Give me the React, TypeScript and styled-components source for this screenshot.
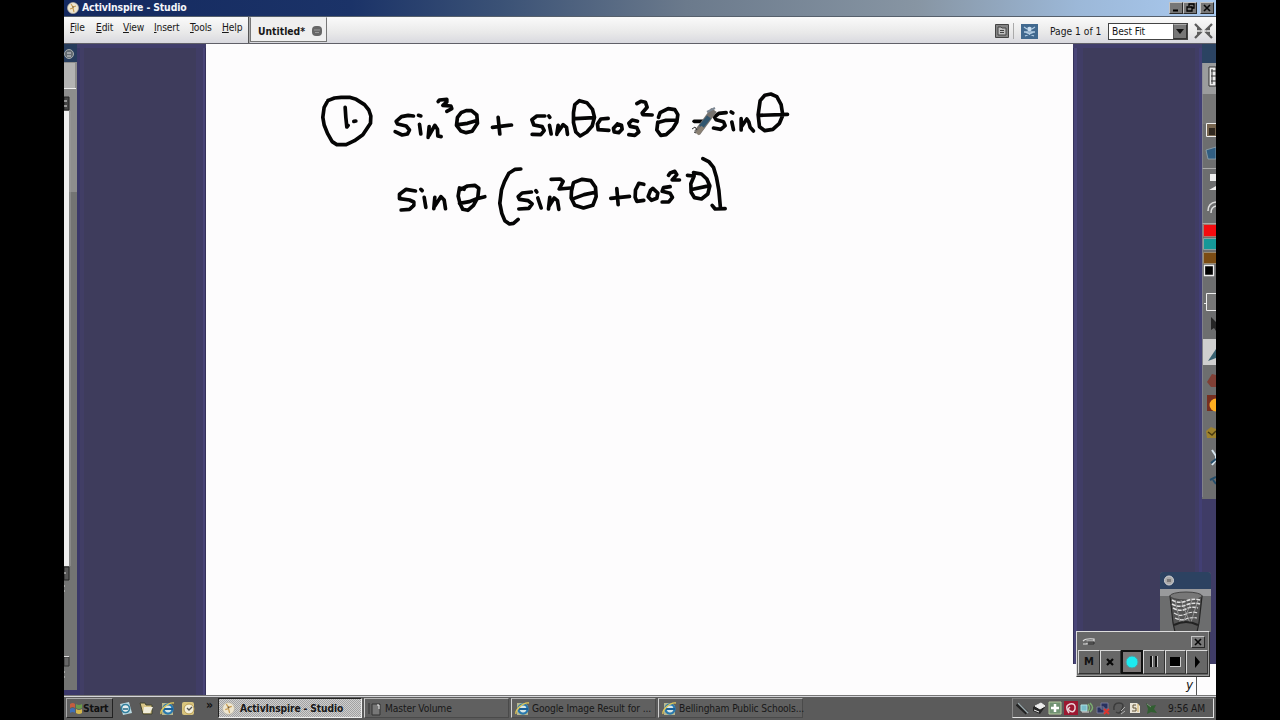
import React from "react";
import styled, {createGlobalStyle, css} from "styled-components";

const GlobalStyle = createGlobalStyle`
  * {
    box-sizing: border-box;
  }

  body {
    margin: 0;
    background: #000;
    overflow: hidden;
    font-family: "DejaVu Sans Condensed", "DejaVu Sans", sans-serif;
    font-stretch: condensed;
    font-size: 10.5px;
    color: #181818;
  }

  svg {
    display: block;
    flex: none;
  }
`

const Desktop = styled.div`
  width: 1152px;
  height: 720px;
  margin-left: 64px;
  display: flex;
  flex-direction: column;
  overflow: hidden;
  position: relative;
`

const TitleBar = styled.header`
  height: 17px;
  flex: none;
  display: flex;
  align-items: center;
  gap: 3px;
  padding: 0 2px 1px 3px;
  background: linear-gradient(90deg, #14295f 0%, #1b3368 25%, #3b5276 38%, #6b7a8c 54%, #8795a3 74%, #9cb8d8 88%, #a9c9ef 100%);
  border-bottom: 1px solid #56606c;
`

const Title = styled.h1`
  flex: 1;
  margin: 0;
  font-size: 10.4px;
  font-weight: bold;
  line-height: 15px;
  letter-spacing: -0.15px;
  color: #f4f6fa;
`

const WindowButtons = styled.div`
  display: flex;
`

const WindowButton = styled.button<{ $apart?: boolean }>`
  width: 14px;
  height: 12px;
  padding: 0;
  margin-left: ${p => p.$apart ? 3 : 0}px;
  display: grid;
  place-items: center;
  background: #777;
  border: 1px solid;
  border-color: #c4c4c4 #292929 #292929 #c4c4c4;
`

const MenuBar = styled.nav`
  height: 27px;
  flex: none;
  display: flex;
  background: linear-gradient(#fafafa, #e9e9e9 60%, #d9d9df);
  border-bottom: 1px solid #606068;
`

const Menus = styled.div`
  width: 185px;
  padding: 4px 0 0 6px;
  display: flex;
  border-right: 1px solid #555;
  box-shadow: 1px 0 #aaa;
`

const MenuItem = styled.span<{ $width: number }>`
  width: ${p => p.$width}px;
  font-size: 10.2px;
  line-height: 14px;
  letter-spacing: -0.15px;
`

const DocTab = styled.div`
  width: 77px;
  height: 25px;
  margin-left: 1px;
  padding: 2px 4px 0 7px;
  display: flex;
  align-items: center;
  justify-content: space-between;
  font-size: 10.3px;
  font-weight: bold;
  background: #efefef;
  border: 1px solid #777;
  border-top-color: #eee;
`

const PageTools = styled.div`
  margin-left: auto;
  padding: 2px 3px 0 0;
  display: flex;
  align-items: center;
`

const PageIcons = styled.div`
  display: flex;
  align-items: center;
  gap: 7px;
`

const PageCount = styled.span`
  width: 58px;
  margin-left: 12px;
  font-size: 10.2px;
  white-space: nowrap;
`

const ZoomSelect = styled.div`
  width: 80px;
  height: 17px;
  padding-left: 3px;
  display: flex;
  align-items: center;
  justify-content: space-between;
  font-size: 10.2px;
  letter-spacing: -0.1px;
  background: #fff;
  border: 1px solid #444;
  margin-right: 6px;
`

const ZoomArrow = styled.span`
  width: 14px;
  height: 15px;
  display: grid;
  place-items: center;
  background: #777;
  border: 1px solid;
  border-color: #aaa #333 #333 #555;
`

const Workspace = styled.main`
  height: 651px;
  flex: none;
  display: flex;
`

const Gutter = styled.div<{ $side: "left" | "right" }>`
  flex: 1;
  background: #3e3c5c;
  border-top: 4px solid #413e6c;
  box-shadow: ${p => p.$side === "left"
    ? "inset 3px 0 #3a3868, inset 7px 0 #413e65, inset -1px 0 #34315a, inset -3px 0 #494578, inset -10px 0 #403d66"
    : "inset 1px 0 #34315a, inset 4px 0 #494578, inset 10px 0 #403d66, inset -3px 0 #423f74, inset -7px 0 #403d65"};
`

const PageSheet = styled.section`
  width: 867px;
  background: #fdfcfd;
`

const RightSide = styled.aside`
  width: 143px;
  display: flex;
  flex-direction: column;
`

const RightTop = styled.div`
  height: 620px;
  display: flex;
`

const RightFoot = styled.footer`
  flex: 1;
  background: #fdfcfd;
  display: flex;
  align-items: flex-end;
  justify-content: flex-end;
`

const TypedLetter = styled.span`
  width: 14px;
  height: 18px;
  margin-right: 19px;
  padding-left: 3px;
  border-right: 1px solid #555;
  font: italic 12px/16px "DejaVu Sans", sans-serif;
`

const Dock = styled.div<{ $width: number, $height: number }>`
  width: ${p => p.$width}px;
  height: ${p => p.$height}px;
  flex: none;
  overflow: hidden;
  background: #6b6c6d;
`

const LeftColumn = styled.div`
  width: 142px;
  display: flex;
  background: #3b386a;
`

const RightDockColumn = styled.div`
  width: 14px;
  background: #3f3c66;
`

const TrashWindow = styled.div`
  position: absolute;
  left: 1096px;
  top: 572px;
  width: 51px;
  height: 60px;
  border-radius: 3px 3px 0 0;
  overflow: hidden;
`

const Recorder = styled.div`
  position: absolute;
  left: 1012px;
  top: 631px;
  width: 134px;
  height: 46px;
  padding: 1px;
  background: #686868;
  border: 1px solid;
  border-color: #ddd #333 #333 #ddd;
  box-shadow: inset -1px -1px #999;
`

const RecorderHead = styled.div`
  height: 17px;
  padding: 0 3px 0 4px;
  display: flex;
  align-items: center;
  justify-content: space-between;
`

const RecorderButtons = styled.div`
  display: grid;
  grid-template-columns: repeat(6, 1fr);
  height: 24px;
`

const RecorderButton = styled.button<{ $on?: boolean }>`
  padding: 0 0 1px;
  display: grid;
  place-items: center;
  background: #676767;
  border: 1px solid;
  border-color: #d8d8d8 #333 #333 #d8d8d8;
  font: bold 11px "DejaVu Sans Condensed", "DejaVu Sans", sans-serif;
  color: #111;
  ${p => p.$on && css`
    background: #7c7777;
    border: 2px solid #111;
  `}
`

const TaskBar = styled.footer`
  flex: 1;
  padding: 2px;
  display: flex;
  align-items: center;
  background: #5b5b5b;
  border-top: 1px solid #777;
  box-shadow: inset 0 1px #d6d6da;
`

const StartButton = styled.button`
  width: 47px;
  height: 20px;
  padding: 0 0 0 2px;
  display: flex;
  align-items: center;
  font: bold 10.3px "DejaVu Sans Condensed", "DejaVu Sans", sans-serif;
  letter-spacing: -0.2px;
  color: #111;
  background: #5e5e5e;
  border: 1px solid;
  border-color: #aaa #222 #222 #aaa;
`

const QuickLaunch = styled.div`
  width: 105px;
  height: 20px;
  padding-left: 5px;
  display: flex;
  align-items: center;
  gap: 6px;
`

const More = styled.span`
  margin: -6px 0 0 4px;
  font-size: 12px;
  font-weight: bold;
  color: #111;
`

const Task = styled.div<{ $width: number, $active?: boolean }>`
  width: ${p => p.$width}px;
  height: 20px;
  margin-right: 2px;
  padding: 1px 3px 0;
  display: flex;
  align-items: center;
  gap: 2px;
  white-space: nowrap;
  font-size: 10.2px;
  letter-spacing: -0.12px;
  background: #606060;
  border: 1px solid;
  border-color: #b4b4b4 #4a4a4a #4a4a4a #d0d0d0;
  ${p => p.$active && css`
    font-weight: bold;
    background: repeating-conic-gradient(#cfcfcf 0 25%, #a2a2a2 0 50%) 0 0 / 2px 2px;
    border-color: #222 #eee #eee #222;
  `}
`

const Tray = styled.div`
  width: 202px;
  height: 20px;
  margin-left: auto;
  padding: 0 8px 0 3px;
  display: flex;
  align-items: center;
  justify-content: space-between;
  border: 1px solid;
  border-color: #777 #e4e4e4 #e4e4e4 #888;
`

const TrayIcons = styled.div`
  display: flex;
  gap: 2px;
`

const Clock = styled.time`
  font-size: 10.2px;
  letter-spacing: -0.1px;
`

const menus = [
  {name: "File", width: 26},
  {name: "Edit", width: 27},
  {name: "View", width: 31},
  {name: "Insert", width: 36},
  {name: "Tools", width: 32},
  {name: "Help", width: 24},
]

// pen strokes, drawn at three times the size of the page
const firstStrokes = [
  "M55 62L75 54L95 52L120 52L140 58L165 74L178 90L184 108L183 130L160 164L135 182L110 194L82 194L68 185L54 160L44 135L40 112L44 82L55 62",
  "M107 82L109 112L112 141L116 136", "M133 124L139 123",
  "M312 108L296 106L276 110L260 124L264 132L290 138L300 150L294 162L278 165L257 155",
  "M330 133L334 162", "M327 106L334 108",
  "M356 172L359 140M359 166L376 136L384 148L385 168L395 170",
  "M386 65L390 60L412 58L412 66L400 76L424 78L427 86L412 94",
  "M455 98L470 92L486 92L502 105L504 130L488 154L470 158L454 153L441 136L444 112L455 98M446 134L474 130L500 122",
  "M549 142L606 135M566 112L571 162",
  "M318 333L290 328L270 343L270 356L300 360L313 366L313 376L300 388L275 390",
  "M344 352L349 382", "M334 328L338 332",
  "M373 386L376 352M376 378L394 350L404 360L408 386",
  "M464 328L450 324L446 348L452 372L460 388L475 391L492 376L505 352L508 325L496 316L474 318L454 328M450 370L480 365L502 356L526 350",
  "M634 267L617 268L598 280L585 305L576 330L571 370L577 400L586 422L600 432L612 430L626 418",
]

const secondStrokes = [
  "M136 108L112 108L97 119L103 135L128 140L134 152L124 164L98 163",
  "M150 136L155 162", "M148 108L151 112",
  "M172 163L176 136M174 158L191 134L201 142L204 163",
  "M222 98L226 74L240 62L262 68L279 88L285 112L278 138L262 156L242 168L229 156L222 128L222 98M228 116L284 113",
  "M326 115L304 117L294 132L296 149L328 151",
  "M354 132L342 145L344 156L358 158L368 148L366 136L354 132",
  "M414 124L398 120L388 130L392 139L412 143L418 156L406 166L388 164",
  "M412 71L424 64L438 67L443 82L428 99L430 104L458 105",
  "M477 112L482 98L506 86L526 89L535 104L532 126L520 146L500 164L484 166L472 150L475 126M478 127L500 121L530 120",
  "M584 124L614 124",
  "M680 98L658 100L645 111L650 119L672 125L677 137L664 148L642 144",
  "M697 126L702 149", "M695 96L700 99",
  "M725 150L725 116M726 140L742 117L748 126L752 142L762 153",
  "M776 104L782 62L796 46L814 42L832 50L845 74L850 106L840 130L820 148L796 152L780 140L776 104M780 106L864 103",
  "M96 336L68 339L56 350L60 358L86 362L98 372L88 385L58 387",
  "M115 354L125 384", "M109 332L112 336",
  "M147 387L151 352M149 378L164 354L174 362L178 388",
  "M155 298L182 297L191 304L179 327L213 324",
  "M216 333L222 308L248 298L274 302L288 322L290 350L280 376L252 384L226 376L215 354L216 333M222 356L254 344L288 337",
  "M334 355L390 349M352 326L356 374",
  "M433 313L418 310L408 330L407 352L412 364L433 361",
  "M453 331L446 350L456 361L472 355L475 339L460 325L453 331",
  "M512 320L492 323L488 334L512 340L519 352L508 366L488 366",
  "M507 286L512 279L526 274L532 284L518 300L540 300",
  "M564 286L582 288M582 278L606 282L622 297L631 318L625 342L606 357L585 353L575 337L574 311L584 288M580 328L631 317",
  "M610 236L629 246L642 262L651 292L658 330L663 385M638 376L647 387L677 386",
]

const Ink = () => (
  <svg width="867" height="651" viewBox="206 44 867 651" fill="none" stroke="#050505" strokeWidth="11"
       strokeLinecap="round" strokeLinejoin="round">
    <g transform="translate(309.500 80) scale(.3333)">
      {firstStrokes.map(d => <path key={d} d={d}/>)}
    </g>
    <g transform="translate(499.500 80) scale(.3333)">
      {secondStrokes.map(d => <path key={d} d={d}/>)}
    </g>
    {/* pen cursor */}
    <g strokeLinecap="butt">
      <path d="M697 133L714 110" stroke="#77736f" strokeWidth="7"/>
      <path d="M701 127L709 117" stroke="#31566f" strokeWidth="5"/>
      <path d="M697 134L703 127" stroke="#8b8174" strokeWidth="4"/>
      <path d="M707 112L715 108" stroke="#7c8793" strokeWidth="2"/>
      <path d="M692 129l3-2 2 3M694 132l2 1" stroke="#333" strokeWidth="1"/>
    </g>
  </svg>
)

const InspireIcon = ({size = 12}: { size?: number }) => (
  <svg width={size} height={size} viewBox="0 0 12 12">
    <circle cx="6" cy="6" r="5.5" fill="#eee6d0" stroke="#b7b2a4" strokeWidth=".7"/>
    <path d="M4 2l2 3 3-1M3 7l3-1 1 4" fill="none" stroke="#c99c50" strokeWidth="1.1"/>
    <circle cx="6" cy="5" r=".8" fill="#6c5b45"/>
  </svg>
)

const ExplorerIcon = ({size = 15}: { size?: number }) => (
  <svg width={size} height={size} viewBox="0 0 15 15">
    <path d="M2 2h8l3 3v9H2z" fill="#b7b78f"/>
    <circle cx="8" cy="8" r="4.600" fill="#d7e8e8" stroke="#2a79ae" strokeWidth="2.400"/>
    <path d="M4 8h9" stroke="#1c6097" strokeWidth="2"/>
    <path d="M1 13C0 9 8 1 14 2" fill="none" stroke="#dfc65a" strokeWidth="1.400"/>
  </svg>
)

const LeftDockArt = () => (
  <svg width="13" height="646" viewBox="64 44 13 646">
    <path d="M64 44h13v646H64z" fill="#737473"/>
    <path d="M64 62h13v130H64z" fill="#8d8d8d"/>
    <path d="M64 44h13v18H64z" fill="#263c5d"/>
    <circle cx="69" cy="54" r="4.500" fill="#626b72" stroke="#a4aaad"/>
    <path d="M67 53h4M67 56h4" stroke="#ddd"/>
    <path d="M64 63h11v25H64z" fill="#b3b3b3"/>
    <path d="M64 88.500h12" stroke="#eee"/>
    <path d="M64 111h5v455h-5z" fill="#efefef"/>
    <path d="M70 111v455" stroke="#9b9b9b"/>
    <path d="M64 97h5v13h-5z" fill="#444" stroke="#222"/>
    <path d="M64 101h3M64 106h3" stroke="#eee"/>
    <path d="M64 567h5v13h-5z" fill="#555" stroke="#222"/>
    <path d="M64 573h2M64 586h1M64 591h1M64 672h1M64 677h1" stroke="#ddd"/>
    <path d="M64 657h5v9h-5z" fill="#666" stroke="#333"/>
    <path d="M64 656.500h5" stroke="#ddd"/>
  </svg>
)

const RightDockArt = () => (
  <svg width="14" height="455" viewBox="1202 44 14 455">
    <path d="M1202 44h14v455h-14z" fill="#6d6e6f"/>
    <path d="M1202 44h14v19h-14z" fill="#2b4362"/>
    <path d="M1202 63h14v34h-14z" fill="#9b9c9d"/>
    <path d="M1202 94h14v30h-14z" fill="#777"/>
    <path d="M1209 67h7v19h-7z" fill="#eee" stroke="#333"/>
    <path d="M1211 71h5M1211 76h5M1211 81h5M1212 69v15" stroke="#333"/>
    <path d="M1206.500 123.500h12v13h-12z" fill="#786650" stroke="#eee"/>
    <path d="M1209 128h6v7h-6z" fill="#302820"/>
    <path d="M1206 150l10-3v12h-8z" fill="#315e82" stroke="#9eafb8" strokeWidth=".7"/>
    <path d="M1202 168.500h14M1202 223.500h14" stroke="#aaa"/>
    <path d="M1210 174h6v7h-6zM1209 190l7-4v4z" fill="#eee"/>
    <path d="M1208 211q0-8 8-9M1211 213q0-6 5-7" fill="none" stroke="#ddd" strokeWidth="1.500"/>
    <path d="M1203.500 224.500h13v12h-13z" fill="#f40b10" stroke="#a6786f"/>
    <path d="M1203.500 238.500h13v11h-13z" fill="#159898" stroke="#8ba0a0"/>
    <path d="M1203.500 252.500h13v11h-13z" fill="#7b4c14" stroke="#9b8a70"/>
    <path d="M1204.500 265.500h9v10h-9z" fill="#000" stroke="#eee" strokeWidth="1.300"/>
    <path d="M1216 293.500h-9.500v17h9.500" fill="#777" stroke="#eee"/>
    <path d="M1204 303.500h2" stroke="#eee"/>
    <path d="M1211 317l5 5v9l-2-3-3 2z" fill="#252525"/>
    <path d="M1203 339h13v26h-13z" fill="#cfcfcf"/>
    <path d="M1208 361l8-12v9z" fill="#386171"/>
    <path d="M1207 382l5-8 4 1v12h-5z" fill="#803f35"/>
    <path d="M1207 395h9v16h-9z" fill="#762e20"/>
    <circle cx="1216" cy="405" r="6.500" fill="#ffae20"/>
    <path d="M1206 431l5-4 5 2v9h-9z" fill="#9e822e"/>
    <path d="M1208 432l4 3 4-4" fill="none" stroke="#463913" strokeWidth="1.500"/>
    <path d="M1212 450l4 6v4l-4 5" fill="none" stroke="#d5e4ee" strokeWidth="2"/>
    <path d="M1211 463l5-4M1210 480l6-3M1213 480l3 4" stroke="#244e6c" strokeWidth="2"/>
    <path d="M1202.500 63v434" stroke="#8a8a97" strokeWidth=".7"/>
  </svg>
)

const TrashArt = () => (
  <svg width="51" height="60" viewBox="0 0 51 60">
    <path d="M0 0h51v60H0z" fill="#6c6d6e"/>
    <path d="M0 0h51v17H0z" fill="#2c4261"/>
    <path d="M0 17h51v7H0z" fill="#999a9c"/>
    <circle cx="9" cy="8.500" r="4.500" fill="#aaa" stroke="#d2d5d6"/>
    <path d="M7 7h4v3H7z" fill="#777"/>
    <path d="M10 24l3 27 2 9h22l2-9 3-27z" fill="#555" stroke="#242424" strokeWidth="1.200"/>
    <ellipse cx="26" cy="24" rx="16" ry="4" fill="#777" stroke="#444"/>
    <g fill="none" stroke="#dedede" strokeWidth="1.600" strokeDasharray="4 1">
      <path d="M12 28q7 4 14 1t14-1M12 32q7 4 14 1t14-1M13 36q7 4 13 1t12-1"/>
      <path d="M14 41q6 4 12 1t12-1M15 46q6 3 11 1t11-1" strokeWidth="1.200"/>
    </g>
    <path d="M15 28l5 22M21 28l9 23M32 28l-9 23M38 28l-7 22" fill="none" stroke="#aaa" strokeWidth=".7"/>
    <path d="M14 53q12-6 24 0" fill="none" stroke="#222" strokeWidth="2"/>
  </svg>
)

const trayArt = [
  <><path d="M1 3l10 9" stroke="#222" strokeWidth="4"/><path d="M2 2l10 10" stroke="#98a5a9" strokeWidth="1.500"/></>,
  <><path d="M1 6l7-4 5 4-5 7-7-3z" fill="#262626"/><path d="M3 5l6-3 4 3-5 3zM2 9l5 2" fill="#eee" stroke="#eee"/></>,
  <><path d="M1 1h12v12H1z" fill="#719273" stroke="#b5c79d"/><path d="M7 3v8M3 7h8" stroke="#fff" strokeWidth="2.500"/></>,
  <><path d="M0 0h14v14H0z" fill="#9c1831"/><path d="M5 12q-5-7 1-9 6-1 5 5-1 4-5 2-3-2 0-4" fill="none" stroke="#ead4da" strokeWidth="1.500"/></>,
  <><path d="M1 4h6v6H1z" fill="#79bdca" stroke="#aee0e2"/><path d="M8 3q3 4 0 7M10 2q5 5 0 9" fill="none" stroke="#7cb071" strokeWidth="1.500"/><path d="M2 11h7" stroke="#ddd"/></>,
  <><path d="M5 2h7v6H5zM1 6h7v6H1z" fill="#28315f" stroke="#777896"/><path d="M8 8l5 5M13 8l-5 5" stroke="#dc3530" strokeWidth="2"/></>,
  <><path d="M2 9q-1-7 5-7t3 6q-2 6-6 3" fill="none" stroke="#3c3c3c" strokeWidth="1.500"/><path d="M9 10l4-4M9 13l4-3" stroke="#b0b0b0"/></>,
  <><path d="M2 2h7l3 3v7H2z" fill="#e9e3d7"/><path d="M8 4H5v3h3v3H4" fill="none" stroke="#635439"/><path d="M10 3v8" stroke="#dab563"/></>,
  <><path d="M2 2l4 3 6-1-2 4 3 4-6-1-4 2 1-5z" fill="#315e31"/><path d="M3 3l4 3" stroke="#799178"/></>,
]

const CloseMark = () => (
  <svg width="8" height="8" viewBox="0 0 8 8">
    <path d="M1 1l6 6M7 1L1 7" stroke="#080808" strokeWidth="1.600"/>
  </svg>
)

const App = () => {
  return (
    <>
      <GlobalStyle/>
      <Desktop>
        <TitleBar>
          <InspireIcon size={12}/>
          <Title>ActivInspire - Studio</Title>
          <WindowButtons>
            <WindowButton aria-label="Minimize">
              <svg width="8" height="8"><path d="M1 6.500h5" stroke="#000" strokeWidth="2"/></svg>
            </WindowButton>
            <WindowButton aria-label="Restore">
              <svg width="9" height="9"><path d="M3 3V1h5v4H6M1 4h5v4H1z" fill="none" stroke="#000" strokeWidth="1.300"/></svg>
            </WindowButton>
            <WindowButton $apart aria-label="Close"><CloseMark/></WindowButton>
          </WindowButtons>
        </TitleBar>

        <MenuBar>
          <Menus>
            {menus.map(m => <MenuItem key={m.name} $width={m.width}><u>{m.name[0]}</u>{m.name.slice(1)}</MenuItem>)}
          </Menus>
          <DocTab>
            Untitled*
            <svg width="10" height="10" viewBox="0 0 10 10">
              <rect width="10" height="10" rx="4" fill="#666"/>
              <path d="M2 4h6M3 6.500h4" stroke="#999"/>
            </svg>
          </DocTab>
          <PageTools>
            <PageIcons>
              <svg width="19" height="16" viewBox="0 0 19 16">
                <path d="M.5 1.500h13v13H.5z" fill="#858585" stroke="#444"/>
                <path d="M3 4h3l1 1h4v7H3zM5 7.500h4M5 9.500h4" fill="#c1c1c1" stroke="#444"/>
                <path d="M18.500 0v16" stroke="#aaa"/>
              </svg>
              <svg width="17" height="15" viewBox="0 0 17 15">
                <path d="M0 0h17v15H0z" fill="#41698f"/>
                <circle cx="8.500" cy="5" r="2.300" fill="#c9def0"/>
                <path d="M3 3l3 2M14 3l-3 2M3 8h11M4 12l9-4M13 12L4 8" stroke="#b3cce2" strokeWidth="1.300"/>
              </svg>
            </PageIcons>
            <PageCount>Page 1 of 1</PageCount>
            <ZoomSelect>
              Best Fit
              <ZoomArrow><svg width="8" height="5"><path d="M0 0h8L4 5z" fill="#111"/></svg></ZoomArrow>
            </ZoomSelect>
            <svg width="19" height="18" viewBox="0 0 19 18">
              <path d="M1 2l5 5H3M18 2l-5 5h3M1 16l5-5H3M18 16l-5-5h3M6 7l1 1M13 7l-1 1M6 11l1-1M13 11l-1-1" fill="none"
                    stroke="#5c5c5c" strokeWidth="2.300"/>
            </svg>
          </PageTools>
        </MenuBar>

        <Workspace>
          <LeftColumn>
            <Dock $width={13} $height={646}><LeftDockArt/></Dock>
            <Gutter $side="left"/>
          </LeftColumn>
          <PageSheet><Ink/></PageSheet>
          <RightSide>
            <RightTop>
              <Gutter $side="right"/>
              <RightDockColumn>
                <Dock $width={14} $height={455}><RightDockArt/></Dock>
              </RightDockColumn>
            </RightTop>
            <RightFoot><TypedLetter>y</TypedLetter></RightFoot>
          </RightSide>
        </Workspace>

        <TaskBar>
          <StartButton>
            <svg width="14" height="15" viewBox="0 0 14 15">
              <path d="M1 3q3-2 5 0v4Q4 5 1 7z" fill="#c45d3f"/>
              <path d="M7 3q3 2 6 0v4q-3 2-6 0z" fill="#6a9a4a"/>
              <path d="M1 8q3-2 5 0v4q-2-2-5 0z" fill="#3f6fb5"/>
              <path d="M7 8q3 2 6 0v4q-3 2-6 0z" fill="#d5b74b"/>
            </svg>
            Start
          </StartButton>
          <QuickLaunch>
            <svg width="15" height="15" viewBox="0 0 15 15">
              <path d="M2 3l9-2 3 11-9 2z" fill="#b9d7df"/>
              <circle cx="7.500" cy="7.500" r="4" fill="#e6eeee" stroke="#327f9d" strokeWidth="1.700"/>
              <path d="M5 8h5" stroke="#256883" strokeWidth="1.500"/>
            </svg>
            <svg width="15" height="15" viewBox="0 0 15 15">
              <path d="M1 2h5l1 2h6v9H4z" fill="#d9c688" stroke="#42442e"/>
              <path d="M5 6h9l-3 6H4z" fill="#f0edda"/>
            </svg>
            <ExplorerIcon/>
            <svg width="15" height="15" viewBox="0 0 15 15">
              <rect x="1" y="1" width="12" height="13" rx="2" fill="#d8c47d"/>
              <circle cx="8" cy="8" r="5" fill="#f3efd9" stroke="#b89b50"/>
              <path d="M6 7l2 2 3-3" fill="none" stroke="#555" strokeWidth="1.300"/>
            </svg>
            <More>»</More>
          </QuickLaunch>
          <Task $width={144} $active><InspireIcon size={13}/>&nbsp;ActivInspire - Studio</Task>
          <Task $width={145}>
            <svg width="15" height="14" viewBox="0 0 15 14">
              <path d="M1 1v11M4 2h8v11H4z" fill="#777" stroke="#333"/>
              <path d="M9 3h2v4" fill="none" stroke="#eee"/>
            </svg>
            Master Volume
          </Task>
          <Task $width={145}><ExplorerIcon/>Google Image Result for ...</Task>
          <Task $width={145}><ExplorerIcon/>Bellingham Public Schools...</Task>
          <Tray>
            <TrayIcons>
              {trayArt.map((art, i) => <svg key={i} width="14" height="14" viewBox="0 0 14 14">{art}</svg>)}
            </TrayIcons>
            <Clock>9:56 AM</Clock>
          </Tray>
        </TaskBar>

        <TrashWindow><TrashArt/></TrashWindow>
        <Recorder>
          <RecorderHead>
            <svg width="14" height="9" viewBox="0 0 14 9">
              <path d="M1 4q3-3 11-2v2H5v3H1" fill="none" stroke="#ddd" strokeWidth="1.200"/>
              <path d="M4 5h8v2H6" fill="none" stroke="#333"/>
            </svg>
            <WindowButton aria-label="Close recorder"><CloseMark/></WindowButton>
          </RecorderHead>
          <RecorderButtons>
            <RecorderButton>M</RecorderButton>
            <RecorderButton><svg width="8" height="8"><path d="M1 1l6 6M7 1L1 7" stroke="#080808" strokeWidth="2.200"/></svg></RecorderButton>
            <RecorderButton $on><svg width="14" height="14"><circle cx="7" cy="7" r="6" fill="#1deaf0" stroke="#559799"/></svg></RecorderButton>
            <RecorderButton><svg width="10" height="11"><path d="M2 0v11M7 0v11" stroke="#111" strokeWidth="2"/><path d="M3.500 0v11M8.500 0v11" stroke="#ccc"/></svg></RecorderButton>
            <RecorderButton><svg width="11" height="10"><path d="M0 0h11v10H0z" fill="#ccc"/><path d="M0 0h10v9H0z"/></svg></RecorderButton>
            <RecorderButton><svg width="7" height="12"><path d="M1 0l5 6-5 6z"/></svg></RecorderButton>
          </RecorderButtons>
        </Recorder>
      </Desktop>
    </>
  )
}

export default App
